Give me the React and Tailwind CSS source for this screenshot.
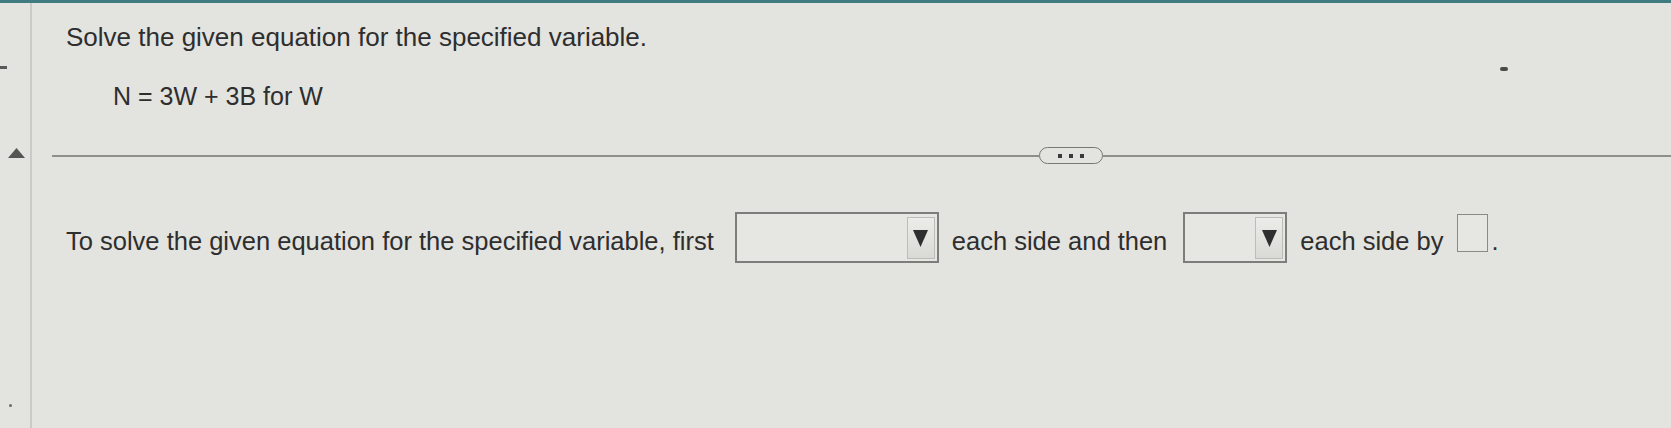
import React from "react";

function Dropdown({ width }) {
  return (
    <div
      className="relative flex h-[51px] shrink-0 items-center justify-end border-2 border-[#7d7d7b] bg-[#e6e6e2] pr-[2px]"
      style={{ width }}
    >
      <div className="flex h-[42px] w-[28px] items-center justify-center border border-[#bdbdb8] bg-gradient-to-b from-[#ececea] to-[#d9d9d5]">
        <svg width="15" height="18" viewBox="0 0 15 18">
          <polygon points="0,1 15,1 7.5,18" fill="#2f2f2f" />
        </svg>
      </div>
    </div>
  );
}

export default function App() {
  const font = { fontFamily: '"Liberation Sans", Arial, sans-serif' };
  return (
    <div
      className="relative flex h-[428px] w-[1671px] flex-col overflow-hidden bg-[#e3e3df] text-[#2e2e2e]"
      style={font}
    >
      <div className="h-[3px] w-full bg-[#3f7b80]" />
      <div className="flex flex-1">
        {/* left gutter */}
        <div className="flex w-[32px] shrink-0 flex-col border-r-2 border-[#cacac6]">
          <div className="mt-[63px] h-[3px] w-[7px] bg-[#5a5a58]" />
          <div className="ml-[8px] mt-[79px]">
            <svg width="17" height="10" viewBox="0 0 17 10">
              <polygon points="8.5,0 17,10 0,10" fill="#555553" />
            </svg>
          </div>
        </div>

        {/* main */}
        <div className="flex flex-1 flex-col pl-[20px]">
          <div className="ml-[14px] mt-[19px] text-[26px] leading-[30px]">
            Solve the given equation for the specified variable.
          </div>
          <div className="ml-[61px] mt-[29px] text-[25px] leading-[30px]">
            N = 3W + 3B for W
          </div>

          <div className="mt-[36px] flex h-[17px] items-center">
            <div className="h-[2px] w-[987px] bg-[#8e8e8b]" />
            <div className="flex h-[17px] w-[64px] shrink-0 items-center justify-center gap-[7px] rounded-full border-[1.5px] border-[#767674] bg-[#e3e3df]">
              <span className="h-[4px] w-[4px] bg-[#3a3a3a]" />
              <span className="h-[4px] w-[4px] bg-[#3a3a3a]" />
              <span className="h-[4px] w-[4px] bg-[#3a3a3a]" />
            </div>
            <div className="h-[2px] flex-1 bg-[#8e8e8b]" />
          </div>

          <div className="ml-[14px] mt-[48px] flex items-start text-[25.5px] leading-[30px]">
            <span className="mt-[14px] whitespace-nowrap">
              To solve the given equation for the specified variable, first
            </span>
            <div className="ml-[21px]">
              <Dropdown width={204} />
            </div>
            <span className="ml-[13px] mt-[14px] whitespace-nowrap">each side and then</span>
            <div className="ml-[16px]">
              <Dropdown width={104} />
            </div>
            <span className="ml-[13px] mt-[14px] whitespace-nowrap">each side by</span>
            <div className="ml-[13px] mt-[2px] h-[38px] w-[31px] border-[1.5px] border-[#8a8a87] bg-[#e6e6e2]" />
            <span className="ml-[4px] mt-[14px]">.</span>
          </div>
        </div>
      </div>

      {/* screen specks */}
      <div className="absolute left-[1500px] top-[67px] h-[4px] w-[8px] rounded-full bg-[#4a4a48]" />
      <div className="absolute left-[9px] top-[404px] h-[3px] w-[3px] rounded-full bg-[#6a6a68]" />
    </div>
  );
}
